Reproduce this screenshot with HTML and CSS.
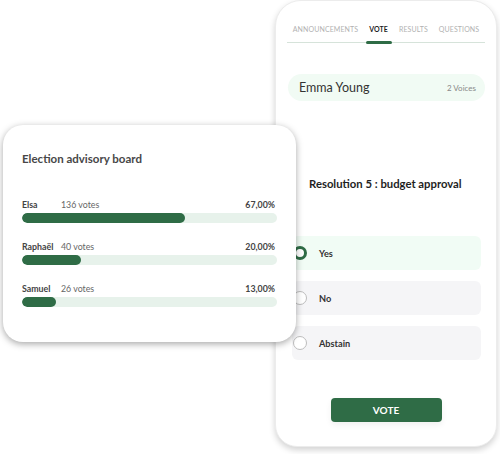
FILE: index.html
```html
<!DOCTYPE html>
<html lang="en">
<head>
<meta charset="utf-8">
<link rel="stylesheet" href="styles.css">
</head>
<body>
<div class="scene">
  <div class="phone">
    <nav class="tabs">
      <span class="tab">Announcements</span>
      <span class="tab active">Vote</span>
      <span class="tab">Results</span>
      <span class="tab">Questions</span>
    </nav>
    <div class="voter">
      <span class="voter-name">Emma Young</span>
      <span class="voter-voices">2 Voices</span>
    </div>
    <h2 class="resolution">Resolution 5 : budget approval</h2>
    <div class="options">
      <div class="option selected"><span class="radio"></span><span class="option-label">Yes</span></div>
      <div class="option"><span class="radio"></span><span class="option-label">No</span></div>
      <div class="option"><span class="radio"></span><span class="option-label">Abstain</span></div>
    </div>
    <div class="actions"><button class="vote-btn">VOTE</button></div>
  </div>

  <div class="card">
    <h3 class="card-title">Election advisory board</h3>
    <div class="result">
      <div class="result-head"><span class="cand">Elsa</span><span class="votes">136 votes</span><span class="pct">67,00%</span></div>
      <div class="track"><div class="fill" style="width:64%"></div></div>
    </div>
    <div class="result">
      <div class="result-head"><span class="cand">Raphaël</span><span class="votes">40 votes</span><span class="pct">20,00%</span></div>
      <div class="track"><div class="fill" style="width:23%"></div></div>
    </div>
    <div class="result">
      <div class="result-head"><span class="cand">Samuel</span><span class="votes">26 votes</span><span class="pct">13,00%</span></div>
      <div class="track"><div class="fill" style="width:13.5%"></div></div>
    </div>
  </div>
</div>
</body>
</html>
```
FILE: styles.css
```css
* { box-sizing: border-box; }
html, body { margin: 0; padding: 0; background: #fff; }
body { font-family: Lato, "Open Sans", sans-serif; color: #333; width: 500px; height: 454px; overflow: hidden; }

.scene { position: relative; width: 500px; height: 454px; }

.phone {
  margin-left: 275px;
  width: 222px;
  height: 447px;
  border: 1px solid #ececec;
  border-radius: 26px 26px 22px 22px;
  box-shadow: 0 3px 6px rgba(0,0,0,0.18);
  background: #fff;
  padding: 0 10px;
  display: flex;
  flex-direction: column;
}

.tabs {
  display: flex;
  justify-content: center;
  gap: 11px;
  padding-top: 24px;
  border-bottom: 1px solid #d6e3da;
  margin: 0 1px;
}
.tab {
  font-size: 7px;
  text-transform: uppercase;
  color: #b2b2b2;
  letter-spacing: 0.1px;
  padding: 0 0 9px;
  position: relative;
}
.tab.active { color: #1f1f1f; font-weight: 700; }
.tab.active::after {
  content: "";
  position: absolute;
  left: -3px; right: -4px; bottom: -2px;
  height: 3px;
  border-radius: 2px;
  background: #2f6c46;
}

.voter {
  margin-top: 31px;
  margin-left: 2px;
  margin-right: 1px;
  height: 27px;
  border-radius: 14px;
  background: #f1fbf4;
  display: flex;
  align-items: center;
  justify-content: space-between;
  padding: 0 9px 0 11px;
}
.voter-name { font-size: 12.5px; color: #333; }
.voter-voices { font-size: 8px; color: #888; }

.resolution {
  margin: 76px 0 0 23px;
  font-size: 11.3px;
  font-weight: 700;
  color: #1e1e1e;
  line-height: 14px;
}

.options {
  margin: 45px 5px 0 6px;
  display: flex;
  flex-direction: column;
  gap: 11px;
}
.option {
  height: 34px;
  border-radius: 6px;
  background: #f5f5f7;
  display: flex;
  align-items: center;
  padding-left: 1px;
}
.option.selected { background: #f1fcf5; }
.radio {
  width: 14px; height: 14px;
  border-radius: 50%;
  border: 1px solid #bdbdbd;
  background: #fff;
  margin-right: 12px;
}
.option.selected .radio { border: 3.5px solid #2f6c46; }
.option-label { font-size: 9.2px; font-weight: 700; color: #333; }

.actions { margin-top: 38px; display: flex; justify-content: center; }
.vote-btn {
  width: 111px; height: 24px;
  border: none;
  border-radius: 4px;
  background: #2f6c46;
  color: #fff;
  font-family: Lato, sans-serif;
  font-size: 10px;
  font-weight: 700;
  box-shadow: 0 3px 6px rgba(0,0,0,0.06);
}

.card {
  position: absolute;
  left: 3px; top: 125px;
  width: 293px; height: 217px;
  background: #fff;
  border-radius: 20px;
  box-shadow: 0 2px 7px rgba(0,0,0,0.35);
  padding: 26px 19px 0 19px;
}
.card-title {
  margin: 0 0 32px;
  font-size: 11.5px;
  font-weight: 700;
  color: #474747;
  line-height: 16px;
}
.result { margin-bottom: 18px; }
.result-head {
  display: flex;
  font-size: 8.8px;
  line-height: 12px;
  margin-bottom: 2px;
}
.cand { width: 39px; font-weight: 700; color: #444; }
.votes { color: #666; flex: 1; }
.pct { font-weight: 700; color: #444; padding-right: 2px; }
.track {
  height: 10px;
  border-radius: 5px;
  background: #e7f2eb;
  overflow: hidden;
}
.fill { height: 100%; background: #2f6c46; border-radius: 5px; }
```
